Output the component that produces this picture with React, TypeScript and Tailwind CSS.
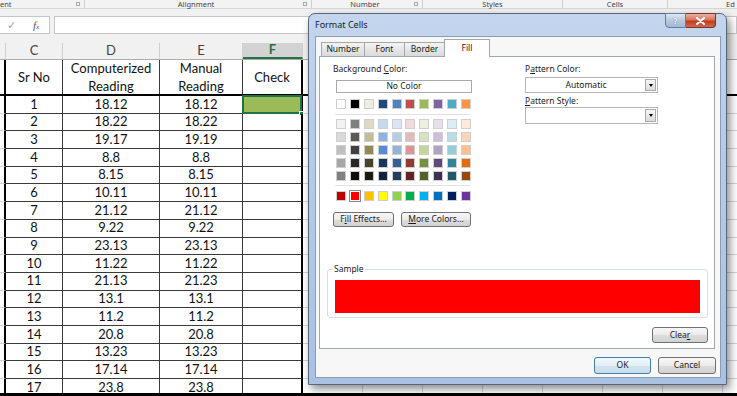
import React from "react";

const data: [number, string, string][] = [
  [1, "18.12", "18.12"],
  [2, "18.22", "18.22"],
  [3, "19.17", "19.19"],
  [4, "8.8", "8.8"],
  [5, "8.15", "8.15"],
  [6, "10.11", "10.11"],
  [7, "21.12", "21.12"],
  [8, "9.22", "9.22"],
  [9, "23.13", "23.13"],
  [10, "11.22", "11.22"],
  [11, "21.13", "21.23"],
  [12, "13.1", "13.1"],
  [13, "11.2", "11.2"],
  [14, "20.8", "20.8"],
  [15, "13.23", "13.23"],
  [16, "17.14", "17.14"],
  [17, "23.8", "23.8"],
];

const themeTop = ["#FFFFFF", "#000000", "#EEECE1", "#1F497D", "#4F81BD", "#C0504D", "#9BBB59", "#8064A2", "#4BACC6", "#F79646"];
const themeShades = [
  ["#F2F2F2", "#7F7F7F", "#DDD9C3", "#C6D9F0", "#DBE5F1", "#F2DCDB", "#EBF1DD", "#E5E0EC", "#DBEEF3", "#FDEADA"],
  ["#D9D9D9", "#595959", "#C4BD97", "#8DB3E2", "#B8CCE4", "#E5B9B7", "#D7E3BC", "#CCC1D9", "#B7DDE8", "#FBD5B5"],
  ["#BFBFBF", "#404040", "#938953", "#548DD4", "#95B3D7", "#D99694", "#C3D69B", "#B2A2C7", "#92CDDC", "#FAC08F"],
  ["#A6A6A6", "#262626", "#494429", "#17365D", "#366092", "#953734", "#76923C", "#5F497A", "#31859B", "#E36C09"],
  ["#808080", "#0D0D0D", "#1D1B10", "#0F243E", "#244061", "#632423", "#4F6128", "#3F3151", "#205867", "#974806"],
];
const standard = ["#C00000", "#FF0000", "#FFC000", "#FFFF00", "#92D050", "#00B050", "#00B0F0", "#0070C0", "#002060", "#7030A0"];

const extraCols = [0, 1, 2, 3, 4, 5, 6, 7];

const btn =
  "flex items-center justify-center rounded-[3px] border border-[#707070] bg-[linear-gradient(to_bottom,#f7f7f7,#ebebeb_50%,#dddddd_51%,#d2d2d2)] text-[8.5px] text-[#1a1a1a]";

const SwatchRow = ({ colors, selected }: { colors: string[]; selected?: number }) => (
  <div className="flex gap-[3.9px] ml-[3px]">
    {colors.map((c, i) => (
      <div
        key={c + i}
        className={
          i === selected
            ? "w-[10px] h-[10px] border border-[#ffffff] shadow-[0_0_0_1px_#8a8a8a]"
            : "w-[10px] h-[10px] border border-[#cfcfcf]"
        }
        style={{ backgroundColor: c }}
      />
    ))}
  </div>
);

const Dropdown = ({ value }: { value?: string }) => (
  <div className="flex items-center w-[133px] h-full bg-white border border-[#b5b5b5] p-px">
    <div className="flex-1 text-center text-[8.5px] text-[#1a1a1a]">{value}</div>
    <div className="w-[11px] h-full flex items-center justify-center border border-[#a9a9a9] bg-[linear-gradient(to_bottom,#f6f6f6,#dcdcdc)]">
      <div className="w-0 h-0 border-l-[2.5px] border-r-[2.5px] border-t-[3px] border-l-transparent border-r-transparent border-t-black" />
    </div>
  </div>
);

const Dialog = () => (
  <div className="absolute left-[308px] top-[13px] w-[419px] h-[372px] rounded-t-[7px] border border-[#55667e] bg-[linear-gradient(to_bottom,#c4d6ee,#b7cce7_30%,#a9c2e3)] shadow-[3px_4px_8px_rgba(0,0,0,0.45)] flex flex-col font-['Noto_Sans',sans-serif]">
    <div className="h-[22px] flex justify-between shrink-0">
      <div className="pl-[6px] self-center text-[9px] text-[#1b1b1b]">Format Cells</div>
      <div className="flex mr-[10px] -mt-px">
        <div className="w-[21px] h-[15px] rounded-bl-[4px] border border-[#6a7d98] bg-[linear-gradient(to_bottom,#dfe8f3,#b8c9df_50%,#a3b8d5)] flex items-center justify-center text-[8px] font-bold text-white [text-shadow:0_0_1px_#3c4f6b]">
          ?
        </div>
        <div className="w-[30px] h-[15px] rounded-br-[4px] border border-l-0 border-[#7a3427] bg-[linear-gradient(to_bottom,#eab1a2,#d9735b_45%,#c23a20_55%,#d46a4c)] flex items-center justify-center">
          <svg width="9" height="8" viewBox="0 0 9 8">
            <path d="M1 1 L8 7 M8 1 L1 7" stroke="white" strokeWidth="2" strokeLinecap="round" />
          </svg>
        </div>
      </div>
    </div>
    <div className="flex-1 ml-[6px] mr-[5px] mb-[6px] bg-[#f7f7f7] border border-[#8b9cb4] flex flex-col">
      <div className="flex items-end ml-[5px] mt-[2px] -mb-px relative z-10 text-[8.5px] text-[#1b1b1b]">
        {[
          ["Number", 44],
          ["Font", 41],
          ["Border", 41],
        ].map(([t, w]) => (
          <div
            key={t as string}
            className="h-[15px] -mr-px border border-[#a3a7ae] bg-[linear-gradient(to_bottom,#f4f4f4,#e6e6e6_50%,#dadada)] flex items-center justify-center"
            style={{ width: w as number }}
          >
            {t}
          </div>
        ))}
        <div className="w-[46px] h-[18px] border border-b-0 border-[#a3a7ae] bg-white flex items-start pt-[2px] justify-center">
          Fill
        </div>
      </div>
      <div className="ml-[3px] w-[396px] h-[293px] bg-white border border-[#a3a7ae] flex flex-col text-[8.5px] text-[#1b1b1b]">
        <div className="flex pt-[7px] pl-[13px]">
          <div className="w-[192px] flex flex-col">
            <div className="h-[10px] leading-[10px]">
              Background <u className="underline-offset-1">C</u>olor:
            </div>
            <div className="mt-[6px] ml-[3px] w-[136px] h-[13px] border border-[#a9a9a9] bg-white flex items-center justify-center">
              No Color
            </div>
            <div className="mt-[6px]">
              <SwatchRow colors={themeTop} />
            </div>
            <div className="mt-[5px] ml-[2px] w-[135px] h-px bg-[#e2e2e2]" />
            <div className="mt-[4px] flex flex-col gap-[3px]">
              {themeShades.map((r, i) => (
                <SwatchRow key={i} colors={r} />
              ))}
            </div>
            <div className="mt-[4px] ml-[2px] w-[135px] h-px bg-[#e2e2e2]" />
            <div className="mt-[5px]">
              <SwatchRow colors={standard} selected={1} />
            </div>
            <div className="mt-[11px] flex gap-[7px]">
              <div className={btn + " w-[61px] h-[15px]"}>
                F<u className="underline-offset-1">i</u>ll Effects...
              </div>
              <div className={btn + " w-[70px] h-[15px]"}>
                <u className="underline-offset-1">M</u>ore Colors...
              </div>
            </div>
          </div>
          <div className="flex flex-col">
            <div className="h-[10px] leading-[10px]">
              P<u className="underline-offset-1">a</u>ttern Color:
            </div>
            <div className="mt-[3px] h-[16px]">
              <Dropdown value="Automatic" />
            </div>
            <div className="mt-[3px] h-[10px] leading-[10px]">
              <u className="underline-offset-1">P</u>attern Style:
            </div>
            <div className="mt-[1px] h-[17px]">
              <Dropdown />
            </div>
          </div>
        </div>
        <fieldset className="mt-[37px] ml-[7px] w-[381px] border border-[#d6dee6] rounded-[3px] px-[7px] pb-[4px]">
          <legend className="ml-[-2px] px-px leading-[10px] text-[8.5px]">Sample</legend>
          <div className="mt-[6px] h-[33px] bg-[#ff0000]" />
        </fieldset>
        <div className={btn + " self-end mr-[6px] mt-[9px] w-[56px] h-[16px]"}>
          Clea<u className="underline-offset-1">r</u>
        </div>
      </div>
      <div className="flex justify-end gap-[7px] mt-[8px] mr-[4px]">
        <div className="w-[57px] h-[17px] rounded-[3px] border border-[#3c7fb1] bg-[linear-gradient(to_bottom,#f3f9fd,#e3eef7_50%,#d3e3f0_51%,#c9dcec)] flex items-center justify-center text-[8.5px] text-[#1a1a1a]">
          OK
        </div>
        <div className={btn + " w-[58px] h-[17px]"}>Cancel</div>
      </div>
    </div>
  </div>
);

const Cell = ({ w, cls, children }: { w: string; cls: string; children?: React.ReactNode }) => (
  <div className={w + " shrink-0 flex items-center justify-center " + cls}>{children}</div>
);

export default function App() {
  return (
    <div className="relative w-[737px] h-[396px] overflow-hidden bg-white flex flex-col font-['Lato',sans-serif]">
      {/* ribbon group labels */}
      <div className="h-[9px] shrink-0 bg-[#f3f3f3] border-b border-[#d6d6d6] flex text-[7.5px] leading-[8px] text-[#444] font-['Noto_Sans',sans-serif]">
        <div className="w-[85px] shrink-0 flex justify-between pr-[4px] border-r border-[#d0d0d0]">
          <span>ent</span>
          <span className="w-[4px] h-[4px] mt-[2px] border border-[#aaa]" />
        </div>
        <div className="w-[227px] shrink-0 flex justify-between pl-[4px] pr-[4px] border-r border-[#d0d0d0]">
          <span />
          <span>Alignment</span>
          <span className="w-[4px] h-[4px] mt-[2px] border border-[#aaa]" />
        </div>
        <div className="w-[111px] shrink-0 flex justify-between pl-[4px] pr-[4px] border-r border-[#d0d0d0]">
          <span />
          <span>Number</span>
          <span className="w-[4px] h-[4px] mt-[2px] border border-[#aaa]" />
        </div>
        <div className="w-[140px] shrink-0 flex justify-center border-r border-[#d0d0d0]">Styles</div>
        <div className="w-[105px] shrink-0 flex justify-center border-r border-[#d0d0d0]">Cells</div>
        <div className="pl-[58px]">Ed</div>
      </div>
      {/* formula bar */}
      <div className="h-[34px] shrink-0 bg-[#f1f1f1] flex items-start pt-[7px]">
        <div className="w-[50px] h-[18px] bg-white border-r border-y border-[#c6c6c6] flex items-center">
          <span className="ml-[7px] text-[11px] text-[#a0a0a0]">✓</span>
          <span className="ml-[17px] text-[11px] text-[#555] italic font-['Liberation_Serif',serif]">
            f<span className="text-[7px]">x</span>
          </span>
        </div>
        <div className="ml-[4px] flex-1 h-[18px] bg-white border border-[#c6c6c6]" />
      </div>
      {/* column headers */}
      <div className="h-[17px] shrink-0 flex bg-[#f1f1f1] border-b border-[#ababab] text-[13px] text-[#444]">
        <Cell w="w-[6px]" cls="border-r border-[#d0d0d0]" />
        <Cell w="w-[57px]" cls="border-r border-[#d0d0d0]">C</Cell>
        <Cell w="w-[97px]" cls="border-r border-[#d0d0d0]">D</Cell>
        <Cell w="w-[83px]" cls="border-r border-[#d0d0d0]">E</Cell>
        <Cell w="w-[60px]" cls="bg-[#d3d3d3] text-[#217346] font-bold border-b-2 border-b-[#217346] border-r border-r-[#d0d0d0]">
          F
        </Cell>
        {extraCols.map((i) => (
          <Cell key={i} w="w-[60px]" cls="border-r border-[#d0d0d0]" />
        ))}
      </div>
      {/* sheet */}
      <div className="flex-1 overflow-hidden text-[13px] text-[#111]">
        <div className="h-[36px] flex border-b-2 border-black leading-[18px]">
          <Cell w="w-[6px]" cls="border-r-2 border-black" />
          <Cell w="w-[57px]" cls="border-r border-[#3a3a3a]">Sr No</Cell>
          <Cell w="w-[97px]" cls="border-r border-[#3a3a3a] text-center">
            Computerized
            <br />
            Reading
          </Cell>
          <Cell w="w-[83px]" cls="border-r border-[#3a3a3a] text-center">
            Manual
            <br />
            Reading
          </Cell>
          <Cell w="w-[60px]" cls="border-r-2 border-black">Check</Cell>
          {extraCols.map((i) => (
            <Cell key={i} w="w-[60px]" cls="border-r border-[#d4d4d4]" />
          ))}
        </div>
        {data.map(([n, a, b]) => (
          <div key={n} className="h-[17.7px] flex">
            <Cell w="w-[6px]" cls="border-r-2 border-r-black border-b border-b-[#d4d4d4]" />
            <Cell w="w-[57px]" cls="border-r border-b border-[#3a3a3a]">{n}</Cell>
            <Cell w="w-[97px]" cls="border-r border-b border-[#3a3a3a]">{a}</Cell>
            <Cell w="w-[83px]" cls="border-r border-b border-[#3a3a3a]">{b}</Cell>
            <Cell w="w-[60px]" cls={"relative border-r-2 border-r-black border-b border-b-[#3a3a3a] " + (n === 1 ? "bg-[#9bbb59]" : "")}>
              {n === 1 && (
                <>
                  <div className="absolute inset-[-1px] border-2 border-[#217346]" />
                  <div className="absolute right-[-3px] bottom-[-3px] w-[5px] h-[5px] bg-[#217346] border border-white" />
                </>
              )}
            </Cell>
            {extraCols.map((i) => (
              <Cell key={i} w="w-[60px]" cls="border-r border-b border-[#d4d4d4]" />
            ))}
          </div>
        ))}
      </div>
      <div className="h-[3px] shrink-0 bg-black" />
      <Dialog />
    </div>
  );
}
